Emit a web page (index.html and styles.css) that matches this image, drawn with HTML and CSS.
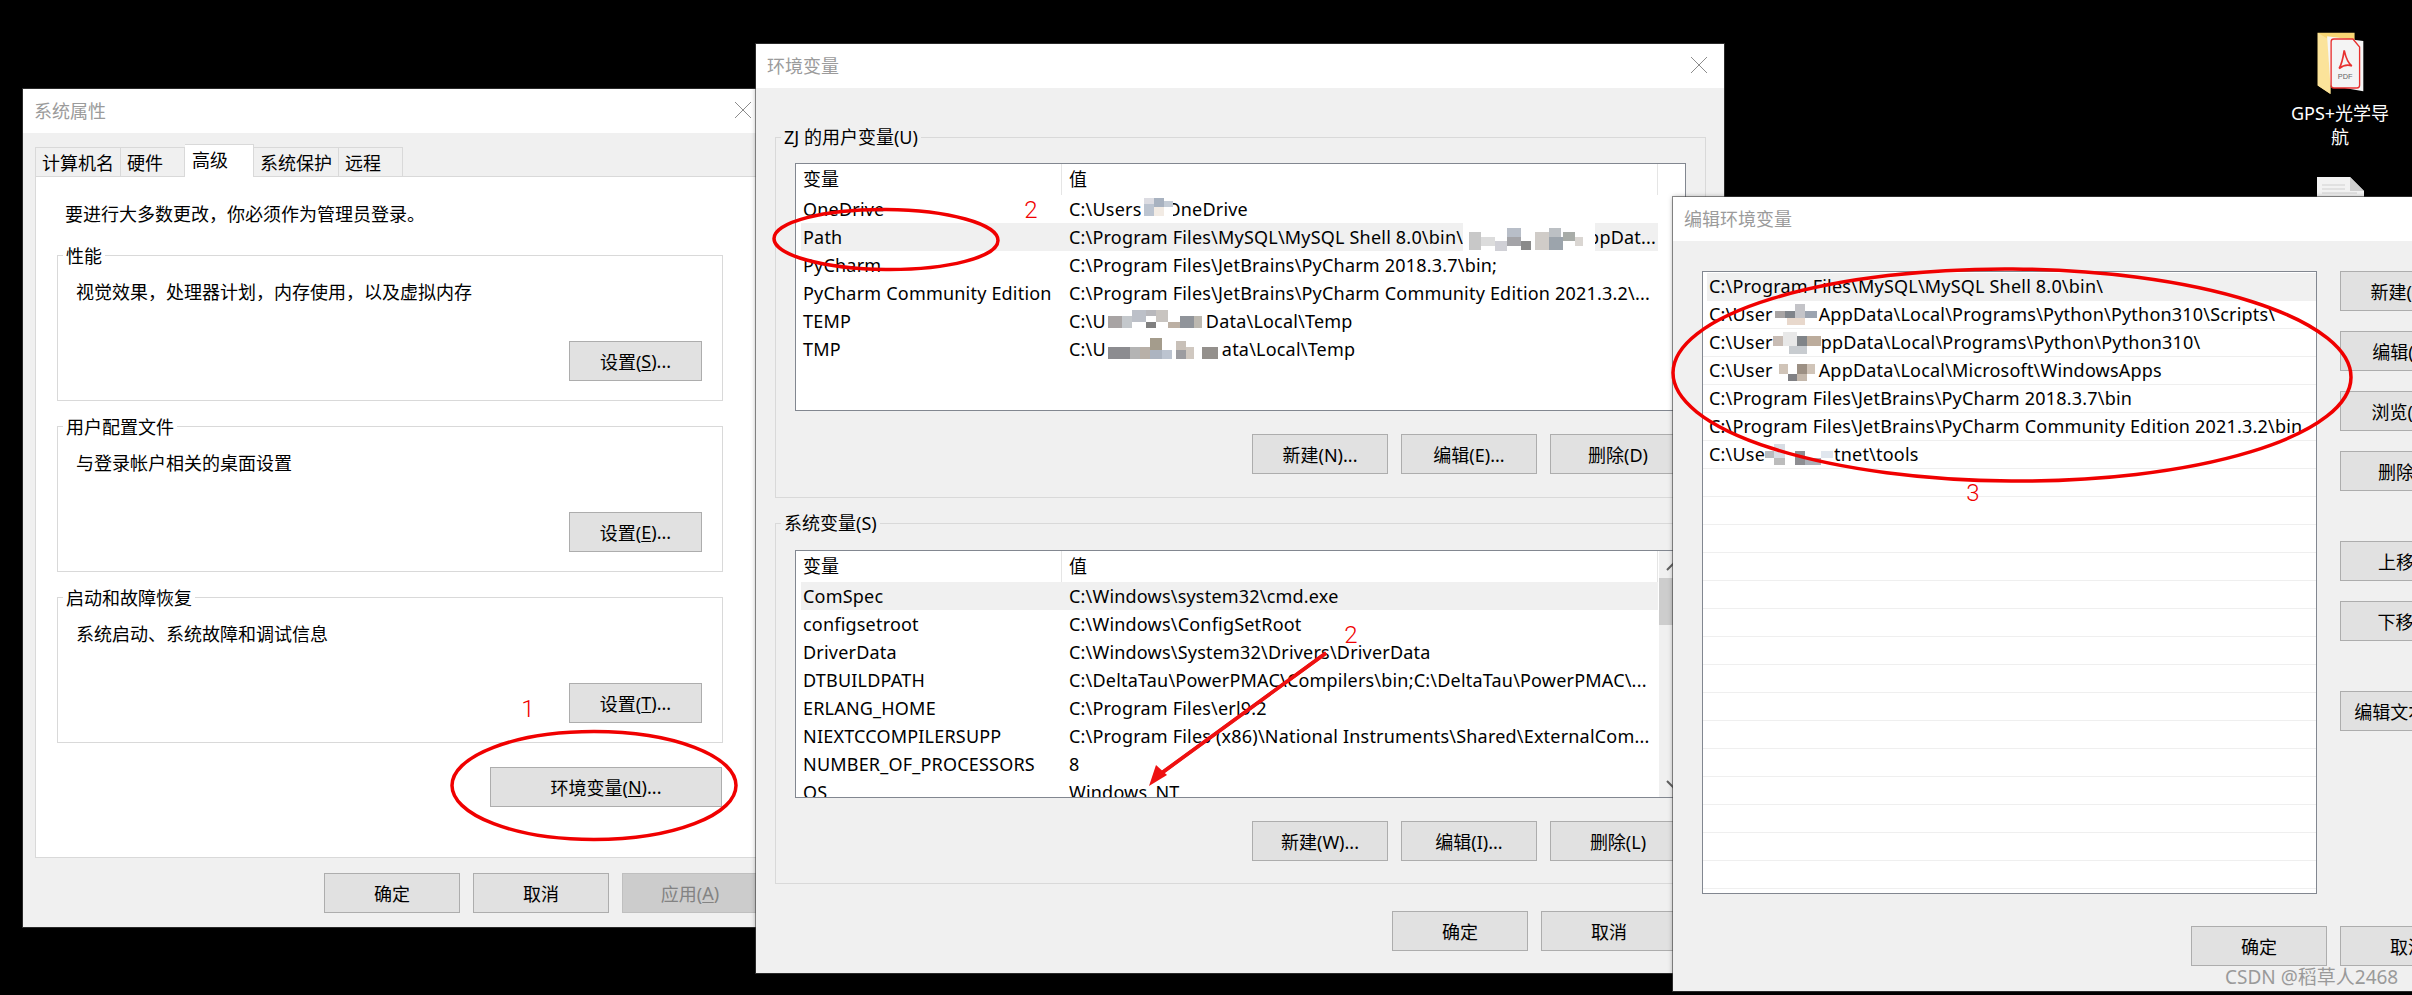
FILE: index.html
```html
<!DOCTYPE html>
<html lang="zh-CN">
<head>
<meta charset="utf-8">
<title>环境变量</title>
<link rel="stylesheet" href="styles.css">
</head>
<body>

<div class="desk-icon desk-icon-pdf">
  <svg class="folder" width="47" height="63" viewBox="228 95 140 188">
    <path d="M230 97 L340 97 L340 125 L268 125 L268 280 L230 255 Z" fill="#f8d674"/>
    <path d="M230 97 L268 120 L268 280 L230 255 Z" fill="#fbe39a"/>
    <path d="M258 108 L366 122 L366 272 L268 255 Z" fill="#f6f6f6"/>
    <path d="M278 116 L335 116 L355 140 L355 254 Q355 262 347 262 L278 262 Q270 262 270 254 L270 124 Q270 116 278 116 Z" fill="#f4f4f4" stroke="#e8312f" stroke-width="4"/>
    <path d="M309 150 C306 170 304 186 294 204 C306 194 320 192 332 196 C322 190 314 172 309 150 Z" fill="none" stroke="#e8312f" stroke-width="5"/>
    <text x="312" y="236" class="pdf-label">PDF</text>
  </svg>
  <div class="desk-label">GPS+光学导<br>航</div>
</div>
<div class="desk-icon desk-icon-doc">
  <svg width="47" height="40" viewBox="0 0 47 40">
    <path d="M0 0 H33 L47 14 V40 H0 Z" fill="#f2f2f2"/>
    <path d="M33 0 L47 14 H33 Z" fill="#cfcfcf"/>
    <path d="M5 8 H28 M5 12 H28 M5 16 H40" stroke="#d0d0d0"/>
  </svg>
</div>

<section class="win win-sys">
  <header class="titlebar">
    <span class="title">系统属性</span>
    <svg class="close" width="16" height="16" viewBox="0 0 16 16"><path d="M0 0 L16 16 M16 0 L0 16"/></svg>
  </header>
  <div class="sys-body">
    <nav class="tabs">
      <span class="tab">计算机名</span>
      <span class="tab">硬件</span>
      <span class="tab tab-active">高级</span>
      <span class="tab">系统保护</span>
      <span class="tab">远程</span>
    </nav>
    <div class="sys-panel">
      <p class="intro">要进行大多数更改，你必须作为管理员登录。</p>
      <div class="group sys-group">
        <span class="legend legend-white">性能</span>
        <p class="desc">视觉效果，处理器计划，内存使用，以及虚拟内存</p>
        <button class="btn btn-set">设置(<u>S</u>)...</button>
      </div>
      <div class="group sys-group">
        <span class="legend legend-white">用户配置文件</span>
        <p class="desc">与登录帐户相关的桌面设置</p>
        <button class="btn btn-set">设置(<u>E</u>)...</button>
      </div>
      <div class="group sys-group">
        <span class="legend legend-white">启动和故障恢复</span>
        <p class="desc">系统启动、系统故障和调试信息</p>
        <button class="btn btn-set">设置(<u>T</u>)...</button>
      </div>
      <button class="btn btn-env">环境变量(<u>N</u>)...</button>
    </div>
    <footer class="sys-footer">
      <button class="btn btn-sys">确定</button>
      <button class="btn btn-sys">取消</button>
      <button class="btn btn-sys btn-disabled">应用(<u>A</u>)</button>
    </footer>
  </div>
</section>

<section class="win win-env">
  <header class="titlebar">
    <span class="title">环境变量</span>
    <svg class="close" width="16" height="16" viewBox="0 0 16 16"><path d="M0 0 L16 16 M16 0 L0 16"/></svg>
  </header>
  <div class="env-body">
    <div class="group env-group">
      <span class="legend">ZJ 的用户变量(U)</span>
      <div class="list">
        <div class="list-main">
          <div class="vrow vhead"><span>变量</span><span>值</span></div>
          <div class="vrow"><span>OneDrive</span><span>C:\Users<svg class="mosaic mosaic-over" width="32" height="18" viewBox="0 0 32 18"><rect width="32" height="18" fill="#fff"/><rect x="3" width="10" height="6" fill="#dcdce2"/><rect x="13" width="10" height="9" fill="#a8b2c0"/><rect y="6" x="3" width="10" height="12" fill="#bcc4d0"/><rect x="23" y="3" width="9" height="6" fill="#c4ccd6"/><rect x="13" y="9" width="10" height="9" fill="#f2ebe4"/></svg>OneDrive</span></div>
          <div class="vrow vrow-sel"><span>Path</span><span>C:\Program Files\MySQL\MySQL Shell 8.0\bin\<svg class="mosaic mosaic-tall mosaic-over" width="132" height="28" viewBox="0 0 132 28"><rect width="132" height="28" fill="#fff"/><rect x="6" y="9" width="12" height="18" fill="#c8c8c8"/><rect x="18" y="14" width="14" height="9" fill="#dcdcdc"/><rect x="32" y="18" width="12" height="10" fill="#d0d0d6"/><rect x="44" y="5" width="14" height="9" fill="#b8bec8"/><rect x="44" y="14" width="14" height="9" fill="#a4a4a8"/><rect x="58" y="18" width="10" height="9" fill="#8a8a8a"/><rect x="72" y="9" width="14" height="18" fill="#d0ccc8"/><rect x="86" y="5" width="12" height="9" fill="#bcc0c4"/><rect x="86" y="14" width="14" height="13" fill="#9ca4ac"/><rect x="100" y="9" width="12" height="9" fill="#a8aca8"/><rect x="112" y="14" width="8" height="9" fill="#dad6d2"/></svg>ppDat...</span></div>
          <div class="vrow"><span>PyCharm</span><span>C:\Program Files\JetBrains\PyCharm 2018.3.7\bin;</span></div>
          <div class="vrow"><span>PyCharm Community Edition</span><span>C:\Program Files\JetBrains\PyCharm Community Edition 2021.3.2\...</span></div>
          <div class="vrow"><span>TEMP</span><span>C:\U<svg class="mosaic" width="100" height="23" viewBox="0 0 100 23"><rect x="2" y="6" width="14" height="12" fill="#a8a4a4"/><rect x="16" y="6" width="10" height="12" fill="#c4c8cc"/><rect x="26" width="14" height="12" fill="#bcc0c8"/><rect x="40" y="12" width="10" height="6" fill="#808080"/><rect x="40" width="10" height="6" fill="#b8b8bc"/><rect x="50" width="12" height="12" fill="#c8c4c0"/><rect x="62" y="12" width="12" height="6" fill="#bcb0a4"/><rect x="74" y="6" width="14" height="12" fill="#90949a"/><rect x="88" y="6" width="8" height="12" fill="#bcb8b0"/></svg>Data\Local\Temp</span></div>
          <div class="vrow"><span>TMP</span><span>C:\U<svg class="mosaic" width="116" height="23" viewBox="0 0 116 23"><rect x="2" y="9" width="22" height="12" fill="#8c8c90"/><rect x="24" y="9" width="10" height="12" fill="#b4b4b4"/><rect x="34" y="9" width="10" height="12" fill="#b8b0a8"/><rect x="44" width="12" height="12" fill="#a49c8c"/><rect x="44" y="12" width="12" height="9" fill="#acb4c0"/><rect x="56" y="12" width="10" height="9" fill="#bcc4d0"/><rect x="70" y="3" width="10" height="9" fill="#c8c0b8"/><rect x="70" y="12" width="10" height="9" fill="#9c9ca0"/><rect x="80" y="9" width="8" height="12" fill="#d0c8c0"/><rect x="96" y="9" width="16" height="12" fill="#94908c"/></svg>ata\Local\Temp</span></div>
        </div>
      </div>
      <div class="btn-row">
        <button class="btn btn-env-sm">新建(N)...</button>
        <button class="btn btn-env-sm">编辑(E)...</button>
        <button class="btn btn-env-sm">删除(D)</button>
      </div>
    </div>
    <div class="group env-group">
      <span class="legend">系统变量(S)</span>
      <div class="list">
        <div class="list-main">
          <div class="vrow vhead"><span>变量</span><span>值</span></div>
          <div class="vrow vrow-sel"><span>ComSpec</span><span>C:\Windows\system32\cmd.exe</span></div>
          <div class="vrow"><span>configsetroot</span><span>C:\Windows\ConfigSetRoot</span></div>
          <div class="vrow"><span>DriverData</span><span>C:\Windows\System32\Drivers\DriverData</span></div>
          <div class="vrow"><span>DTBUILDPATH</span><span>C:\DeltaTau\PowerPMAC\Compilers\bin;C:\DeltaTau\PowerPMAC\...</span></div>
          <div class="vrow"><span>ERLANG_HOME</span><span>C:\Program Files\erl9.2</span></div>
          <div class="vrow"><span>NIEXTCCOMPILERSUPP</span><span>C:\Program Files (x86)\National Instruments\Shared\ExternalCom...</span></div>
          <div class="vrow"><span>NUMBER_OF_PROCESSORS</span><span>8</span></div>
          <div class="vrow"><span>OS</span><span>Windows_NT</span></div>
        </div>
        <div class="scrollbar">
          <svg class="chev" width="14" height="10" viewBox="0 0 14 10"><path d="M1 8 L7 2 L13 8"/></svg>
          <div class="thumb"></div>
          <svg class="chev chev-down" width="14" height="10" viewBox="0 0 14 10"><path d="M1 2 L7 8 L13 2"/></svg>
        </div>
      </div>
      <div class="btn-row">
        <button class="btn btn-env-sm">新建(W)...</button>
        <button class="btn btn-env-sm">编辑(I)...</button>
        <button class="btn btn-env-sm">删除(L)</button>
      </div>
    </div>
    <footer class="env-footer">
      <button class="btn btn-env-sm">确定</button>
      <button class="btn btn-env-sm">取消</button>
    </footer>
  </div>
</section>

<section class="win win-edit">
  <header class="titlebar">
    <span class="title">编辑环境变量</span>
  </header>
  <div class="edit-body">
    <div class="edit-main">
      <div class="edit-list">
        <div class="erow erow-sel">C:\Program Files\MySQL\MySQL Shell 8.0\bin\</div>
        <div class="erow">C:\User<svg class="mosaic" width="46" height="22" viewBox="0 0 46 22"><rect x="2" y="7" width="10" height="7" fill="#a8a4a4"/><rect x="12" y="7" width="10" height="7" fill="#80848a"/><rect x="22" width="10" height="14" fill="#c4c4c8"/><rect x="32" y="7" width="12" height="7" fill="#9ca4b0"/><rect x="14" y="14" width="18" height="7" fill="#e8d8cc"/></svg>AppData\Local\Programs\Python\Python310\Scripts\</div>
        <div class="erow">C:\User<svg class="mosaic" width="48" height="22" viewBox="0 0 48 22"><rect y="4" width="10" height="10" fill="#c8bcb4"/><rect x="10" width="14" height="14" fill="#e8e8e8"/><rect x="24" y="4" width="10" height="10" fill="#808488"/><rect x="34" y="4" width="14" height="10" fill="#bcac9c"/><rect x="16" y="14" width="18" height="8" fill="#c8ccd0"/></svg>ppData\Local\Programs\Python\Python310\</div>
        <div class="erow">C:\User<svg class="mosaic" width="46" height="22" viewBox="0 0 46 22"><rect x="6" y="4" width="9" height="10" fill="#d0c4b8"/><rect x="15" y="14" width="9" height="7" fill="#808084"/><rect x="24" y="4" width="10" height="10" fill="#9c9084"/><rect x="24" y="14" width="10" height="7" fill="#c4b8ac"/><rect x="34" y="4" width="8" height="10" fill="#d0c4b8"/></svg>AppData\Local\Microsoft\WindowsApps</div>
        <div class="erow">C:\Program Files\JetBrains\PyCharm 2018.3.7\bin</div>
        <div class="erow">C:\Program Files\JetBrains\PyCharm Community Edition 2021.3.2\bin</div>
        <div class="erow">C:\Use<svg class="mosaic" width="69" height="22" viewBox="0 0 69 22"><rect y="7" width="9" height="7" fill="#b8bcc0"/><rect x="9" width="11" height="14" fill="#d8dde4"/><rect x="9" y="14" width="11" height="7" fill="#bcbcbc"/><rect x="30" y="7" width="10" height="14" fill="#8e8e92"/><rect x="40" y="14" width="16" height="7" fill="#acb0b8"/><rect x="56" y="7" width="12" height="7" fill="#e0e6ee"/></svg>tnet\tools</div>
        <div class="erow"></div><div class="erow"></div><div class="erow"></div><div class="erow"></div><div class="erow"></div><div class="erow"></div><div class="erow"></div><div class="erow"></div><div class="erow"></div><div class="erow"></div><div class="erow"></div><div class="erow"></div><div class="erow"></div><div class="erow"></div><div class="erow"></div>
      </div>
      <div class="edit-side">
        <button class="btn btn-side">新建(N)...</button>
        <button class="btn btn-side">编辑(E)...</button>
        <button class="btn btn-side">浏览(B)...</button>
        <button class="btn btn-side">删除(D)</button>
        <button class="btn btn-side btn-gap">上移(U)</button>
        <button class="btn btn-side">下移(O)</button>
        <button class="btn btn-side btn-gap">编辑文本(T)...</button>
      </div>
    </div>
    <footer class="edit-footer">
      <button class="btn btn-side">确定</button>
      <button class="btn btn-side">取消</button>
    </footer>
  </div>
</section>

<svg class="notes" width="2412" height="995" viewBox="0 0 2412 995">
  <ellipse cx="594" cy="785.5" rx="142" ry="54"/>
  <ellipse cx="886" cy="239.5" rx="112" ry="30" transform="rotate(0.5 886 239.5)"/>
  <ellipse cx="2012" cy="375" rx="339" ry="106" transform="rotate(0.4 2012 375)"/>
  <path class="arrow" d="M1326 653 L1156 777"/>
  <path class="arrow" d="M1326 653 L1155 778"/>
  <path class="arrow-head" d="M1149 786 L1156 765 L1167 775 Z"/>
  <text x="528" y="717">1</text>
  <text x="1031" y="218">2</text>
  <text x="1351" y="643">2</text>
  <text x="1973" y="501">3</text>
</svg>

<div class="watermark">CSDN @稻草人2468</div>

</body>
</html>
```

FILE: styles.css
```css
* { box-sizing: border-box; }

html, body {
  margin: 0;
  width: 2412px;
  height: 995px;
  overflow: hidden;
  background: #000;
}

body {
  position: relative;
  font-family: "Noto Sans", "Noto Sans CJK SC", sans-serif;
  font-size: 18px;
  color: #000;
}

p { margin: 0; }

/* desktop */
.desk-icon {
  position: absolute;
  width: 120px;
  left: 2280px;
  display: flex;
  flex-direction: column;
  align-items: center;
}
.desk-icon-pdf { top: 32px; }
.desk-icon-doc { top: 177px; }
.desk-label {
  margin-top: 6px;
  color: #fff;
  text-align: center;
  line-height: 24px;
}
.pdf-label {
  font-size: 22px;
  font-family: "Liberation Sans", sans-serif;
  fill: #666;
  text-anchor: middle;
}

/* windows */
.win {
  position: absolute;
  display: flex;
  flex-direction: column;
  background: #f0f0f0;
  box-shadow: 0 0 5px rgba(0, 0, 0, .35);
  outline: 1px solid rgba(70, 70, 70, .6);
}
.win-sys { left: 23px; top: 89px; width: 740px; height: 838px; }
.win-env { left: 756px; top: 44px; width: 968px; height: 929px; }
.win-edit { left: 1673px; top: 197px; width: 830px; height: 794px; }

.titlebar {
  height: 44px;
  flex: none;
  background: #fff;
  display: flex;
  align-items: center;
  justify-content: space-between;
  padding: 0 12px 3px 11px;
}
.win-env .titlebar { padding-right: 17px; }
.title { color: #9b9b9b; }
.close path { stroke: #8c8c8c; fill: none; stroke-width: 1; }

/* buttons */
.btn {
  display: flex;
  align-items: center;
  justify-content: center;
  height: 40px;
  padding: 0;
  background: #e1e1e1;
  border: 1px solid #adadad;
  border-radius: 0;
  color: #000;
  font: inherit;
  white-space: nowrap;
}
.btn u { text-underline-offset: 2px; }
.btn-disabled { background: #cccccc; border-color: #bfbfbf; color: #838383; }
.btn-set { width: 133px; align-self: flex-end; margin: 0 20px 19px 0; }
.btn-env { width: 232px; margin-left: 433px; }
.btn-sys { width: 136px; }
.btn-env-sm { width: 136px; }
.btn-side { width: 136px; }

/* system properties */
.sys-body {
  flex: 1;
  padding: 12px 0 0 12px;
  display: flex;
  flex-direction: column;
}
.tabs {
  display: flex;
  align-items: flex-end;
  height: 32px;
  margin-bottom: -1px;
}
.tab {
  height: 30px;
  min-width: 64px;
  padding: 0 6px;
  line-height: 30px;
  border: 1px solid #d9d9d9;
  border-left: 0;
  border-bottom: 0;
  position: relative;
}
.tab:first-child { border-left: 1px solid #d9d9d9; }
.tab-active {
  height: 33px;
  min-width: 69px;
  line-height: 31px;
  background: #fff;
  padding-left: 7px;
  z-index: 1;
}
.sys-panel {
  height: 682px;
  background: #fff;
  border: 1px solid #d9d9d9;
  padding: 25px 0 0 21px;
  display: flex;
  flex-direction: column;
}
.intro { line-height: 24px; margin: 0 0 29px 8px; }
.group {
  position: relative;
  border: 1px solid #d9d9d9;
  display: flex;
  flex-direction: column;
}
.legend {
  position: absolute;
  top: -13px;
  left: 5px;
  padding: 0 3px;
  line-height: 24px;
  background: #f0f0f0;
  white-space: nowrap;
}
.legend-white { background: #fff; top: -12px; }
.sys-group {
  width: 666px;
  height: 146px;
  justify-content: space-between;
  padding-top: 24px;
  margin-bottom: 25px;
}
.sys-panel .btn-env { margin-top: -1px; }
.desc { line-height: 24px; padding-left: 18px; }
.sys-footer {
  display: flex;
  gap: 13px;
  margin: 15px 0 0 289px;
}

/* environment variables */
.env-body {
  flex: 1;
  padding: 49px 0 0 19px;
  display: flex;
  flex-direction: column;
}
.env-group {
  width: 931px;
  height: 361px;
  padding: 25px 0 0 19px;
  margin-bottom: 25px;
}
.env-group + .env-group { padding-top: 26px; }
.list {
  width: 891px;
  height: 248px;
  flex: none;
  background: #fff;
  border: 1px solid #828790;
  padding-left: 5px;
  display: flex;
  overflow: hidden;
}
.list-main { width: 857px; flex: none; }
.vrow {
  display: grid;
  grid-template-columns: 261px 1fr;
  height: 28px;
  line-height: 28px;
  letter-spacing: .2px;
  white-space: nowrap;
  overflow: hidden;
}
.vrow span { padding-left: 2px; overflow: hidden; }
.vrow span + span { padding-left: 7px; }
.vhead { height: 31px; line-height: 31px; letter-spacing: 0; }
.vhead span { border-right: 1px solid #e5e5e5; }
.vrow-sel { background: #f0f0f0; }
.mosaic { vertical-align: top; margin-top: 3px; }
.mosaic-tall { margin-top: 0; }
.mosaic-over { position: relative; margin-right: -7px; }
.scrollbar {
  width: 27px;
  margin-left: 1px;
  flex: none;
  background: #f0f0f0;
  display: flex;
  flex-direction: column;
  align-items: center;
  padding-top: 11px;
}
.thumb { width: 100%; height: 47px; margin-top: 6px; background: #cdcdcd; }
.chev path { fill: none; stroke: #606060; stroke-width: 2; }
.chev-down { margin-top: 154px; }
.btn-row {
  display: flex;
  gap: 13px;
  margin: 23px 0 0 457px;
}
.env-footer {
  display: flex;
  gap: 13px;
  margin: 2px 0 0 617px;
}

/* edit variable */
.edit-body {
  flex: 1;
  padding: 30px 0 0 29px;
  display: flex;
  flex-direction: column;
}
.edit-main { display: flex; gap: 23px; align-items: flex-start; }
.edit-list {
  width: 615px;
  height: 623px;
  background: #fff;
  border: 1px solid #828790;
  padding-top: 1px;
  overflow: hidden;
}
.erow {
  height: 28px;
  line-height: 27px;
  letter-spacing: .2px;
  padding-left: 6px;
  border-bottom: 1px solid #efefef;
  white-space: nowrap;
}
.erow-sel {
  margin-left: 4px;
  padding-left: 2px;
  background: #f0f0f0;
  border-bottom: 0;
}
.edit-side { display: flex; flex-direction: column; gap: 20px; }
.btn-gap { margin-top: 30px; }
.edit-footer {
  display: flex;
  gap: 13px;
  margin: 32px 0 0 489px;
}

/* annotations */
.notes { position: absolute; left: 0; top: 0; pointer-events: none; }
.notes ellipse { fill: none; stroke: #f00000; stroke-width: 3.5; }
.notes text {
  fill: #f00000;
  font-family: "Roboto", sans-serif;
  font-weight: 300;
  font-size: 24px;
  text-anchor: middle;
}
.arrow { stroke: #ee1111; stroke-width: 3.5; fill: none; }
.arrow-head { fill: #ee1111; }

.watermark {
  position: absolute;
  left: 2225px;
  top: 965px;
  color: #9a9a9a;
  font-size: 19px;
  line-height: 24px;
  white-space: nowrap;
}
```
